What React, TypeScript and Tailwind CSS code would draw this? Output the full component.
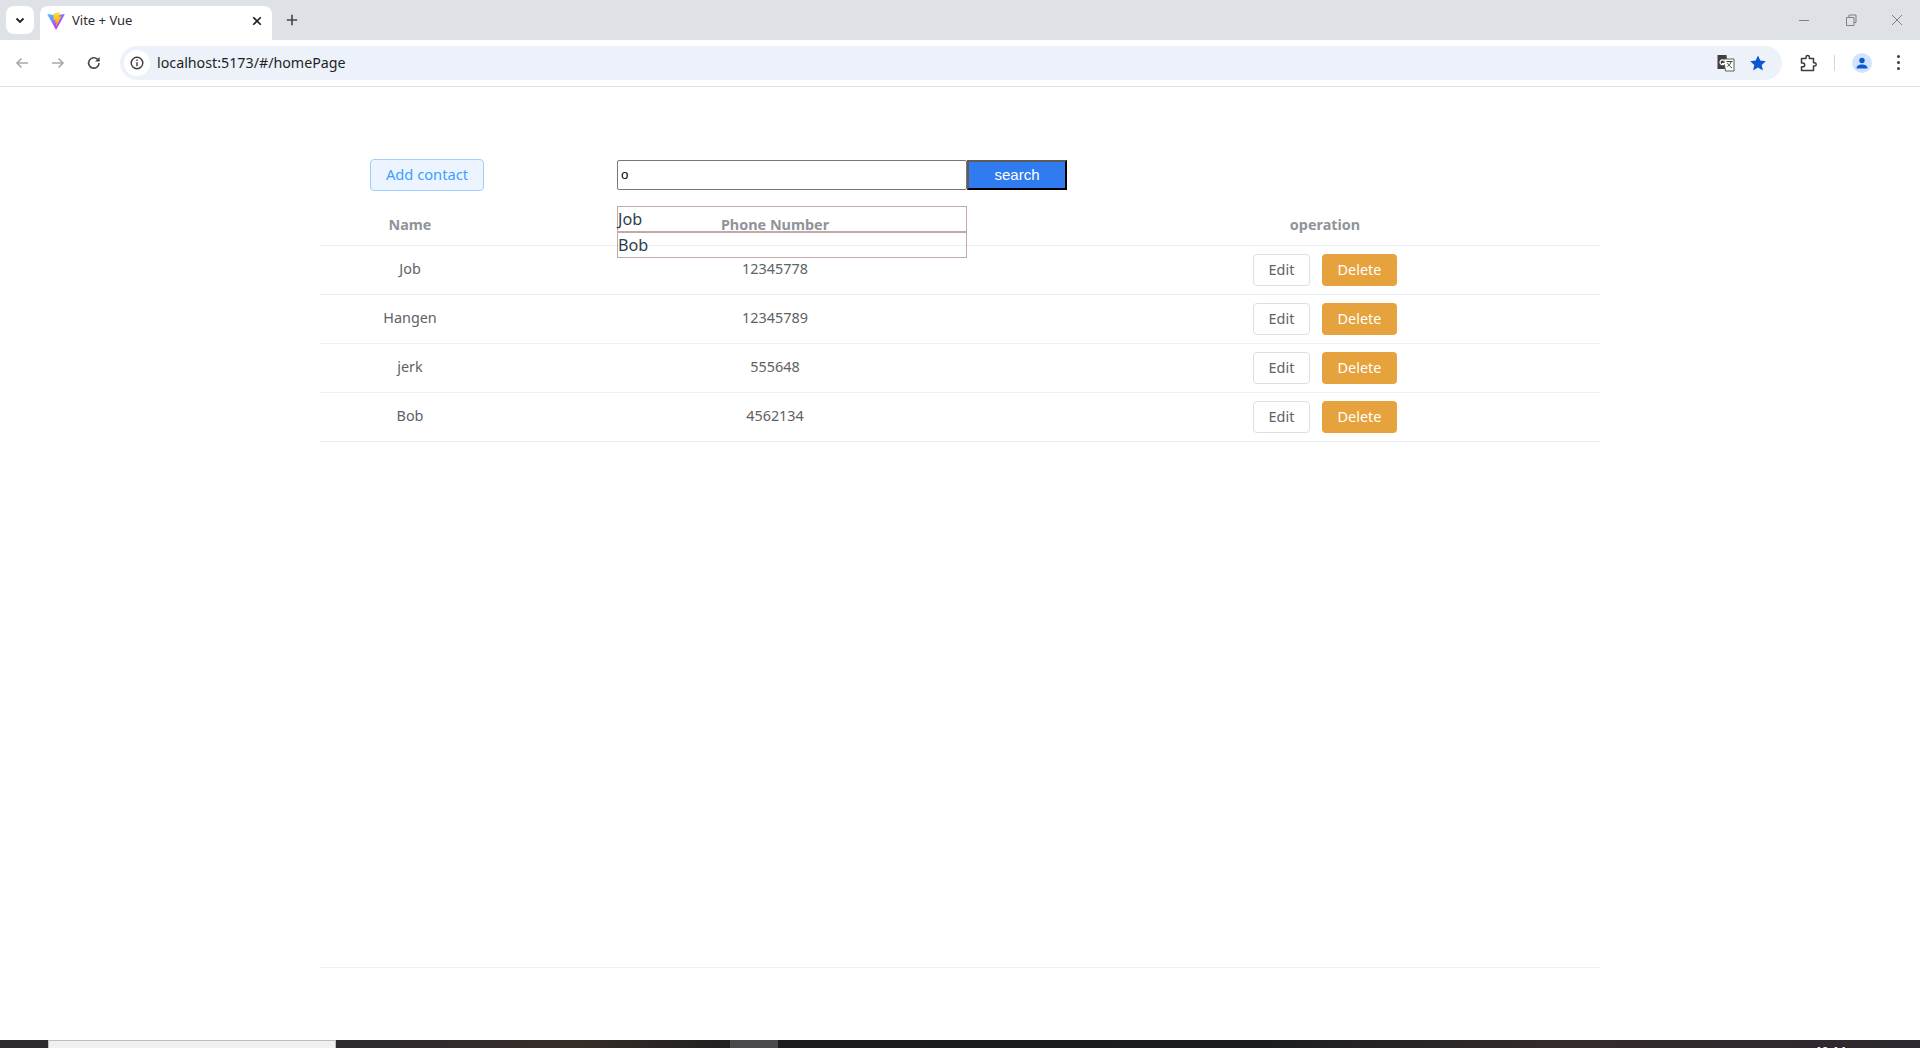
import React from "react";

const rows = [
  ["Job", "12345778"],
  ["Hangen", "12345789"],
  ["jerk", "555648"],
  ["Bob", "4562134"],
];

const ui = { fontFamily: '"Noto Sans", "Open Sans", sans-serif' };

function ViteLogo() {
  return (
    <svg width="18" height="18" viewBox="0 0 410 404" fill="none">
      <path d="M399.641 59.525L215.643 388.545C211.844 395.338 202.084 395.378 198.228 388.618L10.582 59.556C6.381 52.19 12.68 43.267 21.028 44.759L205.223 77.682C206.398 77.892 207.601 77.89 208.776 77.676L389.119 44.806C397.439 43.289 403.768 52.143 399.641 59.525Z" fill="url(#va)" />
      <path d="M292.965 1.574L156.801 28.255C154.563 28.694 152.906 30.59 152.771 32.866L144.395 174.33C144.198 177.662 147.258 180.248 150.51 179.498L188.42 170.749C191.967 169.931 195.172 173.055 194.443 176.622L183.18 231.775C182.422 235.487 185.907 238.661 189.532 237.56L212.947 230.446C216.577 229.344 220.065 232.527 219.297 236.242L201.398 322.875C200.278 328.294 207.486 331.249 210.492 326.603L212.5 323.5L323.454 102.072C325.312 98.365 322.108 94.137 318.036 94.923L279.014 102.454C275.347 103.161 272.227 99.746 273.262 96.158L298.731 7.867C299.767 4.273 296.636 0.855 292.965 1.574Z" fill="url(#vb)" />
      <defs>
        <linearGradient id="va" x1="6" y1="33" x2="235" y2="344" gradientUnits="userSpaceOnUse">
          <stop stopColor="#41D1FF" />
          <stop offset="1" stopColor="#BD34FE" />
        </linearGradient>
        <linearGradient id="vb" x1="194" y1="8" x2="236" y2="293" gradientUnits="userSpaceOnUse">
          <stop stopColor="#FFEA83" />
          <stop offset="0.08" stopColor="#FFDD35" />
          <stop offset="1" stopColor="#FFA800" />
        </linearGradient>
      </defs>
    </svg>
  );
}

function Icon({ children, className = "" }: { children: React.ReactNode; className?: string }) {
  return (
    <svg width="20" height="20" viewBox="0 0 20 20" fill="none" className={className}>
      {children}
    </svg>
  );
}

function TabStrip() {
  return (
    <div className="flex h-10 shrink-0 items-end bg-[#dee1e6] text-[#45474a]">
      <div className="mb-[6px] ml-[6px] flex h-7 w-7 items-center justify-center rounded-lg bg-white">
        <Icon>
          <path d="M6.5 8.5L10 12l3.5-3.5" stroke="#1f1f1f" strokeWidth="1.8" />
        </Icon>
      </div>
      <div className="ml-[6px] flex h-[34px] w-[232px] items-center rounded-t-lg bg-white pb-[5px] pl-[7px] pr-[2px]">
        <ViteLogo />
        <span className="ml-[7px] flex-1 text-[13px] text-[#2c2d30]" style={ui}>
          Vite + Vue
        </span>
        <Icon className="mr-[3px]">
          <path d="M6.2 6.2l7.6 7.6M13.8 6.2l-7.6 7.6" stroke="#1f1f1f" strokeWidth="1.6" />
        </Icon>
      </div>
      <div className="mb-[6px] ml-[6px] flex h-7 w-7 items-center justify-center">
        <Icon>
          <path d="M10 4.8v10.4M4.8 10h10.400" stroke="#454545" strokeWidth="1.6" />
        </Icon>
      </div>
      <div className="flex-1" />
      <div className="mb-[6px] flex h-[28px] items-center gap-[26px] pr-[13px]">
        <Icon>
          <path d="M4 10.5h10" stroke="#7f8083" strokeWidth="1" />
        </Icon>
        <Icon>
          <path d="M5.5 7.5h7.5v8H5.5zM8 7.5V5h7v7.5h-2" stroke="#7f8083" strokeWidth="1" />
        </Icon>
        <Icon>
          <path d="M5 5l10 10M15 5L5 15" stroke="#7f8083" strokeWidth="1" />
        </Icon>
      </div>
    </div>
  );
}

function Toolbar() {
  return (
    <div className="flex h-[47px] shrink-0 items-center rounded-t-lg border-b border-[#dfe1e5] bg-white pb-[1px]">
      <div className="ml-3 flex items-center gap-4">
        <Icon>
          <path d="M16 10H5M9.5 5.5L5 10l4.5 4.5" stroke="#a7a9ac" strokeWidth="1.6" />
        </Icon>
        <Icon>
          <path d="M4 10h11M10.5 5.5L15 10l-4.5 4.500" stroke="#a7a9ac" strokeWidth="1.6" />
        </Icon>
        <Icon>
          <path d="M15 10a5.2 5.2 0 1 1-1.5-3.7L15 7.8" stroke="#474747" strokeWidth="1.6" />
          <path d="M15.6 4v4.6H11z" fill="#474747" />
        </Icon>
      </div>
      <div className="ml-[16px] flex h-[34px] flex-1 items-center rounded-full bg-[#edf2fa]">
        <div className="ml-[4px] flex h-[26px] w-[26px] items-center justify-center rounded-full bg-white">
          <svg width="16" height="16" viewBox="0 0 16 16" fill="none">
            <circle cx="8" cy="8" r="5.8" stroke="#3b3b3b" strokeWidth="1.4" />
            <path d="M8 7.2v4M8 4.6v1.5" stroke="#3b3b3b" strokeWidth="1.4" />
          </svg>
        </div>
        <span className="ml-[7px] flex-1 text-[14.25px] text-[#1f1f1f]" style={ui}>
          localhost:5173/#/homePage
        </span>
        <svg width="20" height="20" viewBox="0 0 20 20" className="mr-[12px]">
          <path d="M1.5 2h9l1.500 14h-10.500z" fill="#3f3f3f" />
          <path d="M7.5 6H18v12H9.500z" fill="#fff" stroke="#5a5a5a" />
          <path d="M8 7.500a2.400 2.400 0 1 0 .5 3H6" stroke="#fff" strokeWidth="1.200" fill="none" />
          <path d="M10.500 8.500h6M15 8.500c-.5 2.500-2 4-3.500 5M11.500 10c.7 1.700 2.300 3.200 4.500 5" stroke="#3f3f3f" strokeWidth="1" fill="none" />
        </svg>
        <svg width="20" height="20" viewBox="0 0 20 20" className="mr-[14px]">
          <path d="M10 2.500l2.300 5.100 5.500.6-4.100 3.700 1.200 5.500L10 14.600l-4.900 2.800 1.200-5.500L2.200 8.200l5.500-.6z" fill="#0b57d0" />
        </svg>
      </div>
      <div className="ml-[16px] flex items-center">
        <Icon>
          <path d="M3.500 5.500H8V4.200a1.700 1.700 0 0 1 3.400 0V5.500h4.100v4.200h1a1.700 1.700 0 0 1 0 3.400h-1v4.400H3.500v-3.700h1.300a1.900 1.900 0 0 0 0-3.800H3.500z" stroke="#3c3c3c" strokeWidth="1.500" strokeLinejoin="round" />
        </Icon>
        <div className="ml-[16px] h-[16px] w-[1px] bg-[#c7d7f0]" />
        <div className="ml-[17px] flex h-5 w-5 items-center justify-center rounded-full bg-[#d3e3fd]">
          <svg width="14" height="14" viewBox="0 0 14 14">
            <circle cx="7" cy="4.500" r="2.700" fill="#0b57d0" />
            <path d="M1.500 12.500c0-2.800 2.500-4 5.500-4s5.500 1.200 5.500 4z" fill="#0b57d0" />
          </svg>
        </div>
        <div className="ml-[16px] mr-[12px] flex h-5 w-5 flex-col items-center justify-center gap-[3px]">
          <span className="h-[3px] w-[3px] rounded-full bg-[#3c3c3c]" />
          <span className="h-[3px] w-[3px] rounded-full bg-[#3c3c3c]" />
          <span className="h-[3px] w-[3px] rounded-full bg-[#3c3c3c]" />
        </div>
      </div>
    </div>
  );
}

function Page() {
  return (
    <div className="relative mx-[320px] flex-1" style={ui}>
      <div className="flex h-[118px] items-start pt-[72px]">
        <button className="ml-[50px] h-8 w-[114px] rounded border border-[#a0cfff] bg-[#ecf5ff] pb-[2px] text-[14.7px] text-[#409eff]">
          Add contact
        </button>
        <div className="ml-[133px] mt-px flex h-[30px]">
          <div
            className="flex h-[30px] w-[350px] items-center rounded-[2px] border border-[#767676] bg-white pl-[3px] text-[13.3px] text-black"
            style={{ fontFamily: '"Liberation Sans", sans-serif' }}
          >
            o
          </div>
          <button
            className="h-[30px] w-[100px] border-2 border-t-[#5c5c5c] border-l-[#5c5c5c] border-r-black border-b-black bg-[#317bf0] text-[15px] text-white"
            style={{ fontFamily: '"Liberation Sans", sans-serif' }}
          >
            search
          </button>
        </div>
      </div>

      <table className="w-[1280px] table-fixed border-collapse text-[14.4px] text-[#606266]">
        <colgroup>
          <col className="w-[180px]" />
          <col className="w-[550px]" />
          <col className="w-[550px]" />
        </colgroup>
        <thead>
          <tr className="h-10 border-b border-[#ebeef5] text-[#909399]">
            <th className="font-bold">Name</th>
            <th className="font-bold">Phone Number</th>
            <th className="font-bold">operation</th>
          </tr>
        </thead>
        <tbody>
          {rows.map(([name, phone]) => (
            <tr key={name} className="h-[49px] border-b border-[#ebeef5]">
              <td className="pb-[1px] text-center">{name}</td>
              <td className="pb-[1px] text-center">{phone}</td>
              <td>
                <div className="flex items-center justify-center gap-3">
                  <button className="h-8 w-[57px] rounded border border-[#dcdfe6] bg-white text-[#606266]">
                    Edit
                  </button>
                  <button className="h-8 w-[75px] rounded bg-[#e6a23c] text-white">Delete</button>
                </div>
              </td>
            </tr>
          ))}
        </tbody>
      </table>

      <div className="mt-[525px] h-px w-[1280px] bg-[#ebeef5]" />

      <div className="absolute left-[297px] top-[119px] w-[350px] text-[16.2px] text-[#2c3e50]">
        <div className="flex h-[26px] items-center border border-[#c0a9a9] leading-none">Job</div>
        <div className="flex h-[26px] items-center border border-[#c0a9a9] leading-none">Bob</div>
      </div>
    </div>
  );
}

function Taskbar() {
  return (
    <div className="relative flex h-2 shrink-0 overflow-hidden bg-[linear-gradient(90deg,#2e2a2e_0%,#2f2a2e_20%,#352d28_30%,#1c1c1e_40%,#1b1d20_65%,#332b2b_80%,#2e2830_100%)]">
      <div className="ml-[48px] h-2 w-[288px] border-x border-t border-[#bdbdbd] bg-[#f0f0f0]" />
      <div className="ml-[394px] h-2 w-[48px] bg-[#4a4a4c]" />
      <span className="absolute left-[1815px] top-[6px] text-[12px] font-bold leading-none text-white" style={ui}>
        10:14
      </span>
    </div>
  );
}

export default function App() {
  return (
    <div className="flex h-[1048px] w-[1920px] flex-col overflow-hidden bg-white">
      <TabStrip />
      <Toolbar />
      <Page />
      <Taskbar />
    </div>
  );
}
